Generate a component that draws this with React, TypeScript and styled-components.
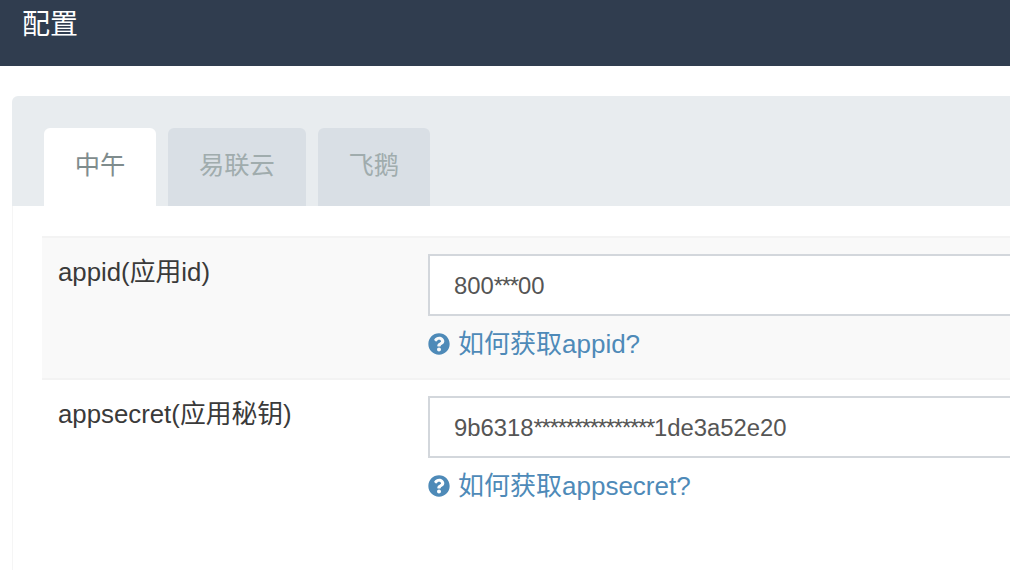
import React from 'react';
import styled, { createGlobalStyle } from 'styled-components';
import { FaQuestionCircle } from 'react-icons/fa';

const tabs = [
  { label: '中午', active: true },
  { label: '易联云', active: false },
  { label: '飞鹅', active: false },
];

const fields = [
  { label: 'appid(应用id)', value: ['800', '***', '00'], help: '如何获取appid?', shaded: true },
  { label: 'appsecret(应用秘钥)', value: ['9b6318', '***************', '1de3a52e20'], help: '如何获取appsecret?', shaded: false },
];

function App() {
  return (
    <Page>
      <GlobalStyle />
      <Header>配置</Header>
      <Panel>
        <TabBar>
          {tabs.map((tab) => (
            <Tab key={tab.label} $active={tab.active}>{tab.label}</Tab>
          ))}
        </TabBar>
        <Body>
          {fields.map((field) => (
            <Row key={field.label} $shaded={field.shaded}>
              <Label>{field.label}</Label>
              <Control>
                <ValueBox>
                  {field.value[0]}
                  <Mask>{field.value[1]}</Mask>
                  {field.value[2]}
                </ValueBox>
                <Help>
                  <FaQuestionCircle size={22} />
                  <span>{field.help}</span>
                </Help>
              </Control>
            </Row>
          ))}
        </Body>
      </Panel>
    </Page>
  );
}

const GlobalStyle = createGlobalStyle`
  html, body {
    margin: 0;
    padding: 0;
    background: #ffffff;
  }
  body {
    font-family: "Liberation Sans", "Noto Sans CJK SC", sans-serif;
  }
`

const Page = styled.div`
  width: 1010px;
  height: 570px;
  overflow: hidden;
`

const Header = styled.div`
  height: 66px;
  box-sizing: border-box;
  padding: 7px 0 0 22px;
  background-color: #303d4f;
  color: #ffffff;
  font-size: 28px;
  line-height: 36px;
`

const Panel = styled.div`
  width: 1040px;
  margin: 30px 0 0 12px;
`

const TabBar = styled.div`
  height: 110px;
  box-sizing: border-box;
  padding: 32px 0 0 32px;
  display: flex;
  gap: 12px;
  background-color: #e8ecef;
  border-radius: 6px 6px 0 0;
`

const Tab = styled.div<{ $active: boolean }>`
  height: 78px;
  box-sizing: border-box;
  padding: 0 30.8px;
  background-color: ${(p) => (p.$active ? '#ffffff' : '#d9dfe5')};
  color: ${(p) => (p.$active ? '#7f8c8d' : '#a0acad')};
  border-radius: 6px 6px 0 0;
  font-size: 25.3px;
  line-height: 74px;
`

const Body = styled.div`
  height: 364px;
  box-sizing: border-box;
  padding: 30px 0 0 29px;
  border-left: 1px solid #f5f5f5;
`

const Row = styled.div<{ $shaded: boolean }>`
  height: ${(p) => (p.$shaded ? '142px' : '150px')};
  box-sizing: border-box;
  display: flex;
  padding: 16px 0 0 16px;
  background-color: ${(p) => (p.$shaded ? '#f9f9f9' : '#ffffff')};
  border-top: 2px solid #f3f3f3;
`

const Label = styled.div`
  width: 370px;
  color: #3a3a3a;
  font-size: 25.8px;
  line-height: 36px;
`

const Control = styled.div`
  flex: 1;
`

const ValueBox = styled.div`
  height: 62px;
  box-sizing: border-box;
  padding: 0 24px;
  background-color: #ffffff;
  border: 2px solid #d3d7dc;
  color: #555555;
  font-size: 23.85px;
  line-height: 60px;
`

const Mask = styled.span`
  letter-spacing: -1.25px;
`

const Help = styled.div`
  display: flex;
  align-items: center;
  gap: 8px;
  margin-top: 10px;
  color: #4e8ab8;
  font-size: 26px;
  line-height: 36px;
`

export default App;
